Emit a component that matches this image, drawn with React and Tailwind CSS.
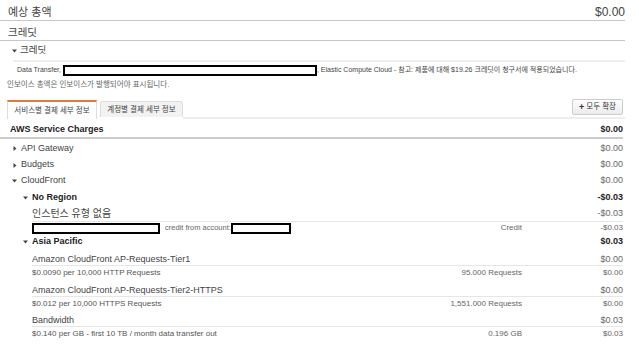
import React from 'react'

const Caret = ({ open }) =>
  open ? (
    <svg width="5" height="4" viewBox="0 0 5 4" className="shrink-0">
      <path d="M0 0.5h5L2.5 3.5z" fill="#444" />
    </svg>
  ) : (
    <svg width="4" height="5" viewBox="0 0 4 5" className="shrink-0">
      <path d="M0.5 0v5l3-2.5z" fill="#444" />
    </svg>
  )

const Redacted = ({ w }) => (
  <span className={`inline-block h-[11px] border-2 border-black bg-white ${w}`} />
)

// label | qty | amount, amounts end at x=623
const Row = ({ className = '', qty, amount, amountClass = 'text-[9px] text-[#666]', children }) => (
  <div className={`flex items-center ${className}`}>
    <div className="flex-1 min-w-0 flex items-center">{children}</div>
    <div className="w-[120px] text-right text-[8px] text-[#666]">{qty}</div>
    <div className={`w-[101px] text-right ${amountClass}`}>{amount}</div>
  </div>
)

const Item = ({ title, detail, qty, amount }) => (
  <div className="ml-[32px]">
    <Row
      className="h-[16px] border-b border-[#e6e6e6] items-start"
      amount={amount}
      amountClass="text-[9px] text-[#666] pt-[3px] leading-[12px]"
    >
      <span className="text-[9px] text-[#444] pt-[3px] leading-[12px]">{title}</span>
    </Row>
    <Row className="h-[14.5px]" qty={qty} amount={amount} amountClass="text-[8px] text-[#666]">
      <span className="text-[8px] text-[#555]">{detail}</span>
    </Row>
  </div>
)

const App = () => {
  return (
    <div className="w-[639px] h-[344px] overflow-hidden bg-white font-['Liberation_Sans','Noto_Sans_CJK_KR',sans-serif]">
      <div className="w-[625px]">
        <div className="h-[21px] flex justify-between border-b border-[#c8c8c8] pl-[8px] text-[#444]">
          <span className="text-[11px] leading-[15px] pt-[5px]">예상 총액</span>
          <span className="text-[12px] leading-[15px] pt-[5px]">$0.00</span>
        </div>
        <div className="h-[20px] border-b border-[#c8c8c8] pl-[8px] text-[#444]">
          <span className="block text-[10.5px] leading-[15px] pt-[4px]">크레딧</span>
        </div>
        <div className="h-[19px] flex items-center pl-[12px] gap-[3px] text-[#444]">
          <Caret open />
          <span className="text-[9.5px]">크레딧</span>
        </div>
        <div className="ml-[13px] h-[19px] border-t-2 border-[#eee] flex items-center pl-[4px] text-[7px] text-[#444] whitespace-nowrap">
          <span>Data Transfer,&nbsp;</span>
          <Redacted w="w-[254px]" />
          <span>, Elastic Compute Cloud - 참고: 제품에 대해 $19.26 크레딧이 청구서에 적용되었습니다.</span>
        </div>
        <div className="h-[11px] pl-[7px] text-[7.5px] leading-[11px] text-[#666]">
          인보이스 총액은 인보이스가 발행되어야 표시됩니다.
        </div>

        <div className="mt-[8px] flex items-end h-[21px]">
          <div className="ml-[7px] w-[90px] h-[19px] border-t-2 border-t-[#e07b39] border-x border-x-[#ddd] bg-white flex items-center justify-center text-[7.5px] text-[#444]">
            서비스별 결제 세부 정보
          </div>
          <div className="ml-[3px] w-[83px] h-[16px] bg-[#f2f2f2] border border-b-0 border-[#ddd] rounded-t-[3px] flex items-center justify-center text-[7.5px] text-[#444] mb-[2px]">
            계정별 결제 세부 정보
          </div>
          <div className="flex-1 h-full border-b-2 border-[#eee] flex justify-end items-start">
            <button className="mt-[1px] mr-[2px] w-[51px] h-[16px] rounded-[2px] border border-[#ccc] bg-gradient-to-b from-white to-[#ececec] text-[7.5px] text-[#333] flex items-center justify-center gap-[2px]">
              <span className="font-bold text-[9px] leading-none">+</span>
              <span>모두 확장</span>
            </button>
          </div>
        </div>

        <div className="pr-[2px]">
          <Row
            className="h-[20px] border-b-2 border-[#ccc] pl-[10px] pt-[3px]"
            amount="$0.00"
            amountClass="text-[9px] font-bold text-[#222]"
          >
            <span className="text-[9px] font-bold text-[#222]">AWS Service Charges</span>
          </Row>
          <Row className="h-[18px] pl-[13px] pt-[1px]" amount="$0.00">
            <Caret />
            <span className="ml-[4px] text-[9px] text-[#444]">API Gateway</span>
          </Row>
          <Row className="h-[16px] pl-[13px]" amount="$0.00">
            <Caret />
            <span className="ml-[4px] text-[9px] text-[#444]">Budgets</span>
          </Row>
          <Row className="h-[16px] pl-[12px]" amount="$0.00">
            <Caret open />
            <span className="ml-[4px] text-[9px] text-[#444]">CloudFront</span>
          </Row>
          <Row
            className="h-[17px] pl-[23px]"
            amount="-$0.03"
            amountClass="text-[9px] font-bold text-[#222]"
          >
            <Caret open />
            <span className="ml-[4px] text-[9px] font-bold text-[#222]">No Region</span>
          </Row>
          <Row className="h-[15px] pl-[32px]" amount="-$0.03">
            <span className="text-[10px] text-[#444]">인스턴스 유형 없음</span>
          </Row>
          <Row
            className="ml-[32px] h-[13px] border-t border-[#e6e6e6]"
            qty="Credit"
            amount="-$0.03"
            amountClass="text-[8px] text-[#666]"
          >
            <Redacted w="w-[128px]" />
            <span className="ml-[5px] text-[7.5px] text-[#666]">credit from account:</span>
            <Redacted w="w-[60px]" />
          </Row>
          <Row
            className="h-[16px] pl-[23px]"
            amount="$0.03"
            amountClass="text-[9px] font-bold text-[#222]"
          >
            <Caret open />
            <span className="ml-[4px] text-[9px] font-bold text-[#222]">Asia Pacific</span>
          </Row>
          <Item
            title="Amazon CloudFront AP-Requests-Tier1"
            detail="$0.0090 per 10,000 HTTP Requests"
            qty="95.000 Requests"
            amount="$0.00"
          />
          <Item
            title="Amazon CloudFront AP-Requests-Tier2-HTTPS"
            detail="$0.012 per 10,000 HTTPS Requests"
            qty="1,551.000 Requests"
            amount="$0.00"
          />
          <Item
            title="Bandwidth"
            detail="$0.140 per GB - first 10 TB / month data transfer out"
            qty="0.196 GB"
            amount="$0.03"
          />
        </div>
      </div>
    </div>
  )
}

export default App
